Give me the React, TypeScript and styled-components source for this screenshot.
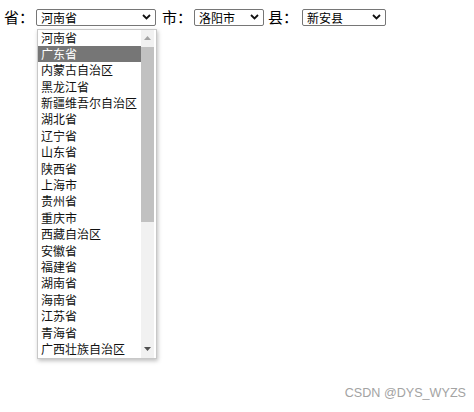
import React from "react";
import styled, { createGlobalStyle } from "styled-components";

const Global = createGlobalStyle`
  html, body { margin: 0; padding: 0; background: #fff; }
  body { width: 474px; height: 412px; overflow: hidden; font-family: "Noto Sans CJK SC", "Noto Sans", sans-serif; }
`;

const Page = styled.div`
  position: relative;
  width: 474px;
  height: 412px;
  padding: 8px 0 0 4px;
  box-sizing: border-box;
`;

const Row = styled.div`
  display: flex;
  align-items: center;
  height: 18px;
`;

const Label = styled.span<{ $gap?: number; $after?: number }>`
  font-size: 15px;
  line-height: 18px;
  color: #000;
  margin-left: ${(p) => p.$gap ?? 0}px;
  margin-right: ${(p) => p.$after ?? 2}px;
  white-space: nowrap;
`;

const Field = styled.div`
  position: relative;
`;

const Select = styled.div<{ $w: number }>`
  box-sizing: border-box;
  width: ${(p) => p.$w}px;
  height: 17px;
  border: 1px solid #767676;
  border-radius: 2px;
  background: #fff;
  display: flex;
  align-items: center;
  justify-content: space-between;
  padding: 0 4px 0 4px;
  font-size: 12px;
  line-height: 15px;
  color: #000;
`;

const Chevron = () => (
  <svg width="9" height="6" viewBox="0 0 9 6">
    <path d="M1 1 L4.5 4.5 L8 1" fill="none" stroke="#111" strokeWidth="1.8" />
  </svg>
);

const Dropdown = styled.div`
  position: absolute;
  left: 1px;
  top: 20px;
  width: 120px;
  height: 330px;
  box-sizing: border-box;
  border: 1px solid #c8c8c8;
  background: #fff;
  box-shadow: 1px 2px 4px rgba(0, 0, 0, 0.25);
  display: flex;
  z-index: 5;
`;

const List = styled.div`
  flex: 1;
`;

const Item = styled.div<{ $active?: boolean }>`
  height: 16.4px;
  line-height: 16.4px;
  font-size: 12px;
  padding-left: 3px;
  white-space: nowrap;
  overflow: hidden;
  color: ${(p) => (p.$active ? "#fff" : "#111")};
  background: ${(p) => (p.$active ? "#767676" : "transparent")};
`;

const Scrollbar = styled.div`
  width: 13px;
  margin-right: 2px;
  background: #f1f1f1;
  display: flex;
  flex-direction: column;
`;

const ArrowBtn = styled.div`
  height: 17px;
  display: flex;
  align-items: center;
  justify-content: center;
`;

const Thumb = styled.div`
  height: 175px;
  background: #c1c1c1;
`;

const Spacer = styled.div`
  flex: 1;
`;

const Watermark = styled.div`
  position: absolute;
  right: 8px;
  bottom: 12px;
  font-family: "Liberation Sans", Arial, sans-serif;
  font-size: 12.6px;
  color: #a3a3a3;
`;

const provinces = [
  "河南省",
  "广东省",
  "内蒙古自治区",
  "黑龙江省",
  "新疆维吾尔自治区",
  "湖北省",
  "辽宁省",
  "山东省",
  "陕西省",
  "上海市",
  "贵州省",
  "重庆市",
  "西藏自治区",
  "安徽省",
  "福建省",
  "湖南省",
  "海南省",
  "江苏省",
  "青海省",
  "广西壮族自治区",
];

export default function App() {
  return (
    <>
      <Global />
      <Page>
        <Row>
          <Label>省：</Label>
          <Field>
            <Select $w={120}>
              <span>河南省</span>
              <Chevron />
            </Select>
            <Dropdown>
              <List>
                {provinces.map((p, i) => (
                  <Item key={p} $active={i === 1}>
                    {p}
                  </Item>
                ))}
              </List>
              <Scrollbar>
                <ArrowBtn>
                  <svg width="7" height="4" viewBox="0 0 7 4">
                    <path d="M0 4 L3.5 0 L7 4 Z" fill="#a3a3a3" />
                  </svg>
                </ArrowBtn>
                <Thumb />
                <Spacer />
                <ArrowBtn>
                  <svg width="7" height="4" viewBox="0 0 7 4">
                    <path d="M0 0 L3.5 4 L7 0 Z" fill="#505050" />
                  </svg>
                </ArrowBtn>
              </Scrollbar>
            </Dropdown>
          </Field>
          <Label $gap={6}>市：</Label>
          <Field>
            <Select $w={70}>
              <span>洛阳市</span>
              <Chevron />
            </Select>
          </Field>
          <Label $gap={4} $after={4}>县：</Label>
          <Field>
            <Select $w={84}>
              <span>新安县</span>
              <Chevron />
            </Select>
          </Field>
        </Row>
        <Watermark>CSDN @DYS_WYZS</Watermark>
      </Page>
    </>
  );
}
